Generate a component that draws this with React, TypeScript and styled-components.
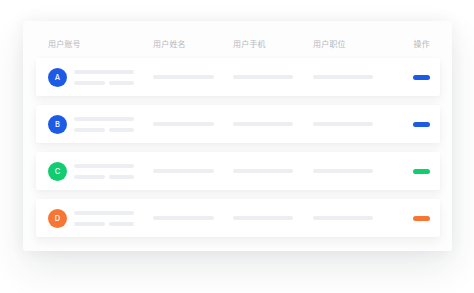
import React from "react";
import styled, { createGlobalStyle } from "styled-components";

const Global = createGlobalStyle`
  html, body { margin: 0; padding: 0; background: #ffffff; }
  body { font-family: "Noto Sans CJK SC", "Noto Sans", sans-serif; }
`;

const Page = styled.div`
  width: 474px;
  height: 293px;
  padding: 21px 0 0 23px;
  box-sizing: border-box;
`;

const Card = styled.div`
  width: 429px;
  height: 230px;
  box-sizing: border-box;
  background: #fdfdfd;
  border-radius: 3px;
  box-shadow: 0 16px 36px rgba(40, 45, 60, 0.1), 0 0 16px rgba(40, 45, 60, 0.05);
  padding: 14px 12px 14px 13px;
  display: flex;
  flex-direction: column;
`;

const Grid = styled.div`
  display: grid;
  grid-template-columns: 105px 80px 80px 100px 17px;
  align-items: center;
  padding: 0 10px 0 12px;
`;

const Header = styled(Grid)`
  height: 16px;
  margin-bottom: 7px;
  font-size: 8px;
  color: #b5b8bd;
  letter-spacing: 0.2px;
`;

const HeadCell = styled.div<{ $end?: boolean }>`
  white-space: nowrap;
  justify-self: ${(p) => (p.$end ? "end" : "start")};
`;

const Rows = styled.div`
  display: flex;
  flex-direction: column;
  gap: 9px;
`;

const Row = styled(Grid)`
  height: 38px;
  background: #ffffff;
  border-radius: 2px;
  box-shadow: 0 5px 10px rgba(40, 45, 60, 0.055), 0 0 3px rgba(40, 45, 60, 0.03);
`;

const Account = styled.div`
  display: flex;
  align-items: center;
  gap: 7px;
`;

const Avatar = styled.div<{ $color: string }>`
  width: 19px;
  height: 19px;
  border-radius: 50%;
  background: ${(p) => p.$color};
  color: #ffffff;
  font-family: Inter, "Noto Sans", sans-serif;
  font-size: 7.5px;
  font-weight: 500;
  display: flex;
  align-items: center;
  justify-content: center;
`;

const Lines = styled.div`
  display: flex;
  flex-direction: column;
  gap: 7px;
  padding-top: 1px;
`;

const LineRow = styled.div`
  display: flex;
  gap: 4px;
`;

const Bar = styled.div<{ $w: number }>`
  width: ${(p) => p.$w}px;
  height: 4px;
  border-radius: 2px;
  background: #eceef2;
`;

const Action = styled.div<{ $color: string }>`
  width: 17px;
  height: 5px;
  border-radius: 3px;
  background: ${(p) => p.$color};
  margin-top: 1px;
`;

const users = [
  { letter: "A", color: "#1d5ae6" },
  { letter: "B", color: "#1d5ae6" },
  { letter: "C", color: "#12cc70" },
  { letter: "D", color: "#f87634" },
];

export default function App() {
  return (
    <>
      <Global />
      <Page>
        <Card>
          <Header>
            <HeadCell>用户账号</HeadCell>
            <HeadCell>用户姓名</HeadCell>
            <HeadCell>用户手机</HeadCell>
            <HeadCell>用户职位</HeadCell>
            <HeadCell $end>操作</HeadCell>
          </Header>
          <Rows>
            {users.map((u) => (
              <Row key={u.letter}>
                <Account>
                  <Avatar $color={u.color}>{u.letter}</Avatar>
                  <Lines>
                    <Bar $w={60} />
                    <LineRow>
                      <Bar $w={31} />
                      <Bar $w={25} />
                    </LineRow>
                  </Lines>
                </Account>
                <Bar $w={61} />
                <Bar $w={60} />
                <Bar $w={60} />
                <Action $color={u.color} />
              </Row>
            ))}
          </Rows>
        </Card>
      </Page>
    </>
  );
}
